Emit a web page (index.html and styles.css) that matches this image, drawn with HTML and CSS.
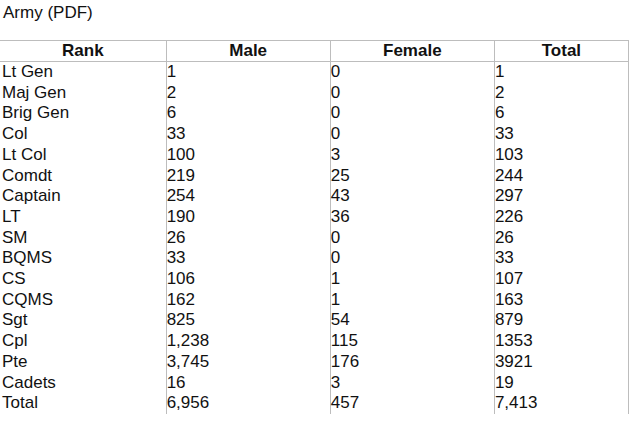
FILE: index.html
```html
<!DOCTYPE html>
<html>
<head>
<meta charset="utf-8">
<link rel="stylesheet" href="styles.css">
</head>
<body>
<div class="title">Army (PDF)</div>
<table class="ranks">
<colgroup>
<col class="c-rank"><col class="c-male"><col class="c-female"><col class="c-total">
</colgroup>
<thead>
<tr><th>Rank</th><th>Male</th><th>Female</th><th>Total</th></tr>
</thead>
<tbody>
<tr><td>Lt Gen</td><td>1</td><td>0</td><td>1</td></tr>
<tr><td>Maj Gen</td><td>2</td><td>0</td><td>2</td></tr>
<tr><td>Brig Gen</td><td>6</td><td>0</td><td>6</td></tr>
<tr><td>Col</td><td>33</td><td>0</td><td>33</td></tr>
<tr><td>Lt Col</td><td>100</td><td>3</td><td>103</td></tr>
<tr><td>Comdt</td><td>219</td><td>25</td><td>244</td></tr>
<tr><td>Captain</td><td>254</td><td>43</td><td>297</td></tr>
<tr><td>LT</td><td>190</td><td>36</td><td>226</td></tr>
<tr><td>SM</td><td>26</td><td>0</td><td>26</td></tr>
<tr><td>BQMS</td><td>33</td><td>0</td><td>33</td></tr>
<tr><td>CS</td><td>106</td><td>1</td><td>107</td></tr>
<tr><td>CQMS</td><td>162</td><td>1</td><td>163</td></tr>
<tr><td>Sgt</td><td>825</td><td>54</td><td>879</td></tr>
<tr><td>Cpl</td><td>1,238</td><td>115</td><td>1353</td></tr>
<tr><td>Pte</td><td>3,745</td><td>176</td><td>3921</td></tr>
<tr><td>Cadets</td><td>16</td><td>3</td><td>19</td></tr>
<tr><td>Total</td><td>6,956</td><td>457</td><td>7,413</td></tr>
</tbody>
</table>
</body>
</html>
```
FILE: styles.css
```css
html, body {
  margin: 0;
  padding: 0;
  background: #fff;
}
body {
  font-family: "Liberation Sans", Arial, sans-serif;
  font-size: 17px;
  color: #111;
}
.title {
  padding: 3px 0 0 3px;
  line-height: 20px;
  height: 40px;
  box-sizing: border-box;
}
.ranks {
  border-collapse: collapse;
  table-layout: fixed;
  width: 629px;
  border-top: 1px solid #bdbdbd;
  border-right: 1px solid #bdbdbd;
}
.c-rank { width: 166px; }
.c-male { width: 164px; }
.c-female { width: 164px; }
.c-total { width: 134px; }
.ranks th {
  font-weight: bold;
  text-align: center;
  height: 20px;
  line-height: 20px;
  padding: 0;
  border-bottom: 1px solid #bdbdbd;
  border-left: 1px solid #bdbdbd;
}
.ranks td {
  height: 20.7px;
  line-height: 20.7px;
  padding: 0;
  border-left: 1px solid #bdbdbd;
  text-align: left;
  white-space: nowrap;
}
.ranks th:first-child,
.ranks td:first-child {
  border-left: none;
}
.ranks td:first-child {
  padding-left: 2px;
}
```
